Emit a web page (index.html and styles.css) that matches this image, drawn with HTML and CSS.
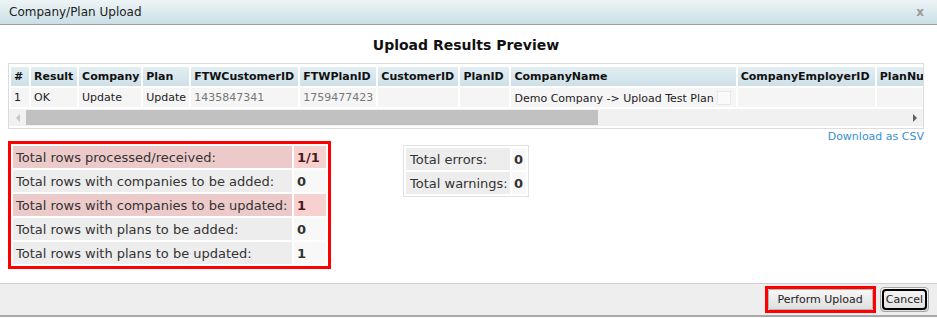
FILE: index.html
```html
<!DOCTYPE html>
<html>
<head>
<meta charset="utf-8">
<link rel="stylesheet" href="styles.css">
</head>
<body>
<div class="dialog">
  <div class="titlebar">
    <span class="title">Company/Plan Upload</span>
    <span class="close">x</span>
  </div>
  <div class="content">
    <h2 class="heading">Upload Results Preview</h2>
    <div class="grid-box">
      <div class="grid-viewport">
        <table class="grid">
          <colgroup>
            <col class="c-num"><col class="c-result"><col class="c-company"><col class="c-plan">
            <col class="c-ftwcust"><col class="c-ftwplan"><col class="c-cust"><col class="c-planid">
            <col class="c-name"><col class="c-emp"><col class="c-plannum">
          </colgroup>
          <thead>
            <tr>
              <th>#</th><th>Result</th><th>Company</th><th>Plan</th><th>FTWCustomerID</th><th>FTWPlanID</th><th>CustomerID</th><th>PlanID</th><th>CompanyName</th><th>CompanyEmployerID</th><th>PlanNumber</th>
            </tr>
          </thead>
          <tbody>
            <tr>
              <td>1</td><td>OK</td><td>Update</td><td>Update</td><td class="id">1435847341</td><td class="id">1759477423</td><td></td><td></td><td>Demo Company -&gt; Upload Test Plan<span class="empty-box"></span></td><td></td><td></td>
            </tr>
          </tbody>
        </table>
      </div>
      <div class="hscroll">
        <span class="arrow left"></span>
        <div class="track"><div class="thumb"></div></div>
        <span class="arrow right"></span>
      </div>
    </div>
    <div class="csv-row"><a class="csv" href="#">Download as CSV</a></div>
    <div class="summaries">
      <table class="summary main">
        <tr class="hl"><td class="lbl">Total rows processed/received:</td><td class="val">1/1</td></tr>
        <tr><td class="lbl">Total rows with companies to be added:</td><td class="val">0</td></tr>
        <tr class="hl"><td class="lbl">Total rows with companies to be updated:</td><td class="val">1</td></tr>
        <tr><td class="lbl">Total rows with plans to be added:</td><td class="val">0</td></tr>
        <tr><td class="lbl">Total rows with plans to be updated:</td><td class="val">1</td></tr>
      </table>
      <table class="summary side">
        <tr><td class="lbl">Total errors:</td><td class="val">0</td></tr>
        <tr><td class="lbl">Total warnings:</td><td class="val">0</td></tr>
      </table>
    </div>
  </div>
  <div class="footer">
    <span class="perform-wrap"><button class="btn">Perform Upload</button></span>
    <button class="btn cancel"><span class="focus">Cancel</span></button>
  </div>
</div>
</body>
</html>
```

FILE: styles.css
```css
html, body {
  margin: 0;
  padding: 0;
  background: #fff;
}
body {
  font-family: "DejaVu Sans", Verdana, sans-serif;
  font-size: 12px;
  color: #222;
  width: 937px;
  height: 318px;
  overflow: hidden;
}
.dialog {
  display: flex;
  flex-direction: column;
}
.titlebar {
  height: 24px;
  border-bottom: 1px solid #a0a0a0;
  background: linear-gradient(#eef4f6, #c9dfe6);
  display: flex;
  align-items: center;
  justify-content: space-between;
  padding: 0 13px 0 9px;
}
.title {
  font-size: 12px;
  color: #222;
}
.close {
  color: #9a9a9a;
  font-weight: bold;
  font-size: 12px;
}
.content {
  padding: 0 13px 0 8px;
  height: 258px;
}
.heading {
  margin: 0;
  padding: 12px 0 0;
  height: 26px;
  text-align: center;
  font-size: 14px;
  font-weight: bold;
  color: #111;
}
.grid-box {
  border: 1px solid #dcdcdc;
  padding: 1px 0 2px;
}
.grid-viewport {
  overflow: hidden;
  width: 914px;
}
.grid {
  border-collapse: separate;
  border-spacing: 2px;
  table-layout: fixed;
  width: 1000px;
  font-size: 11px;
}
.c-num { width: 18px; }
.c-result { width: 46px; }
.c-company { width: 62px; }
.c-plan { width: 46px; }
.c-ftwcust { width: 107px; }
.c-ftwplan { width: 76px; }
.c-cust { width: 80px; }
.c-planid { width: 49px; }
.c-name { width: 224px; }
.c-emp { width: 137px; }
.c-plannum { width: 130px; }
.grid th {
  height: 19px;
  padding: 0 0 0 3px;
  text-align: left;
  font-weight: bold;
  color: #111;
  background: linear-gradient(#e2eef2, #cde0e7);
  white-space: nowrap;
  overflow: hidden;
}
.grid td {
  height: 19px;
  padding: 0 0 0 3px;
  background: #f5f5f5;
  white-space: nowrap;
  overflow: hidden;
  color: #222;
}
.grid td.id {
  color: #777;
}
.empty-box {
  display: inline-block;
  width: 12px;
  height: 12px;
  border: 1px solid #e8e8e8;
  background: #fafafa;
  vertical-align: -3px;
  margin-left: 3px;
}
.hscroll {
  height: 17px;
  background: #f1f1f1;
  display: flex;
  align-items: center;
}
.arrow {
  width: 17px;
  height: 17px;
  display: flex;
  align-items: center;
  justify-content: center;
  flex: none;
}
.arrow::before {
  content: "";
  width: 0;
  height: 0;
  border-top: 4px solid transparent;
  border-bottom: 4px solid transparent;
}
.arrow.left::before {
  border-right: 4px solid #c8c8c8;
}
.arrow.right::before {
  border-left: 4px solid #606060;
}
.track {
  flex: 1;
  height: 17px;
  display: flex;
  align-items: center;
}
.thumb {
  width: 572px;
  height: 15px;
  background: #c1c1c1;
}
.csv-row {
  display: flex;
  justify-content: flex-end;
  height: 15px;
  padding-top: 1px;
}
.csv {
  color: #3a8fd1;
  text-decoration: none;
  font-size: 11px;
}
.summaries {
  display: flex;
  align-items: flex-start;
  gap: 72px;
  margin-top: -4px;
}
.summary {
  border-collapse: separate;
  border-spacing: 2px;
  font-size: 13px;
}
.summary td {
  height: 22px;
  padding: 0 0 0 3px;
  white-space: nowrap;
}
.summary .lbl {
  background: #ededed;
  color: #333;
}
.summary .val {
  background: #f8f8f8;
  font-weight: bold;
  color: #333;
}
.summary.main {
  border: 3px solid #f00;
}
.summary.main .lbl {
  width: 276px;
}
.summary.main .val {
  width: 25px;
  padding-right: 4px;
}
.summary.main tr.hl .lbl {
  background: #edcaca;
}
.summary.main tr.hl .val {
  background: #f7d0d0;
  color: #4a1a1a;
}
.summary.side {
  border: 1px solid #dde2e8;
  margin-top: 4px;
}
.summary.side .lbl {
  width: 100px;
  padding-left: 4px;
}
.summary.side .val {
  width: 12px;
  padding: 0 0 0 2px;
}
.footer {
  height: 31px;
  border-top: 1px solid #cfcfcf;
  border-bottom: 2px solid #a8a8a8;
  background: #eeeeee;
  display: flex;
  align-items: center;
  justify-content: flex-end;
  padding-right: 8px;
  gap: 4px;
}
.perform-wrap {
  border: 3px solid #f00;
  display: flex;
}
.btn {
  font-family: "DejaVu Sans", Verdana, sans-serif;
  font-size: 11px;
  color: #222;
  background: linear-gradient(#f8f8f8, #dedede);
  border: 1px solid #b5b5b5;
  border-radius: 2px;
  height: 21px;
  padding: 0 9px;
  margin: 0;
}
.btn.cancel {
  height: 25px;
  padding: 1px;
  border-radius: 4px;
  border: 1px solid #a5a5a5;
}
.focus {
  display: block;
  border: 2px solid #000;
  border-radius: 4px;
  padding: 0 2px;
  line-height: 17px;
}
```
